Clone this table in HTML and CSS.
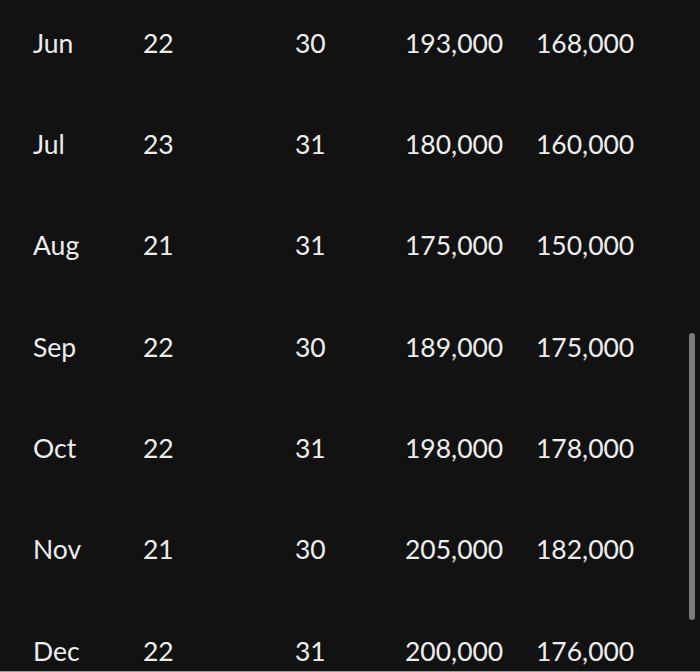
FILE: index.html
```html
<!DOCTYPE html>
<html>
<head>
<meta charset="utf-8">
<link rel="stylesheet" href="styles.css">
</head>
<body>
<div class="screen">
  <div class="table">
    <div class="row"><span>Jun</span><span>22</span><span>30</span><span>193,000</span><span>168,000</span></div>
    <div class="row"><span>Jul</span><span>23</span><span>31</span><span>180,000</span><span>160,000</span></div>
    <div class="row"><span>Aug</span><span>21</span><span>31</span><span>175,000</span><span>150,000</span></div>
    <div class="row"><span>Sep</span><span>22</span><span>30</span><span>189,000</span><span>175,000</span></div>
    <div class="row"><span>Oct</span><span>22</span><span>31</span><span>198,000</span><span>178,000</span></div>
    <div class="row"><span>Nov</span><span>21</span><span>30</span><span>205,000</span><span>182,000</span></div>
    <div class="row"><span>Dec</span><span>22</span><span>31</span><span>200,000</span><span>176,000</span></div>
  </div>
  <div class="scrollbar"></div>
  <div class="edge"></div>
</div>
</body>
</html>
```
FILE: styles.css
```css
html, body {
  margin: 0;
  padding: 0;
  background: #121212;
}
.screen {
  position: relative;
  width: 700px;
  height: 672px;
  overflow: hidden;
  background: #121212;
  font-family: Lato, "Liberation Sans", sans-serif;
  font-weight: 400;
  color: #ededed;
}
.table {
  display: flex;
  flex-direction: column;
  margin-top: -8px;
}
.row {
  display: grid;
  grid-template-columns: 110px 152px 110px 131px auto;
  align-items: center;
  height: 101.33px;
  padding-left: 33px;
  font-size: 26.5px;
  line-height: 30px;
}
.scrollbar {
  position: absolute;
  left: 689px;
  top: 333px;
  width: 6px;
  height: 287px;
  border-radius: 3px;
  background: #7c7c7c;
}
.edge {
  position: absolute;
  left: 0;
  right: 0;
  bottom: 0;
  height: 1px;
  background: #9a9a9a;
}
```
